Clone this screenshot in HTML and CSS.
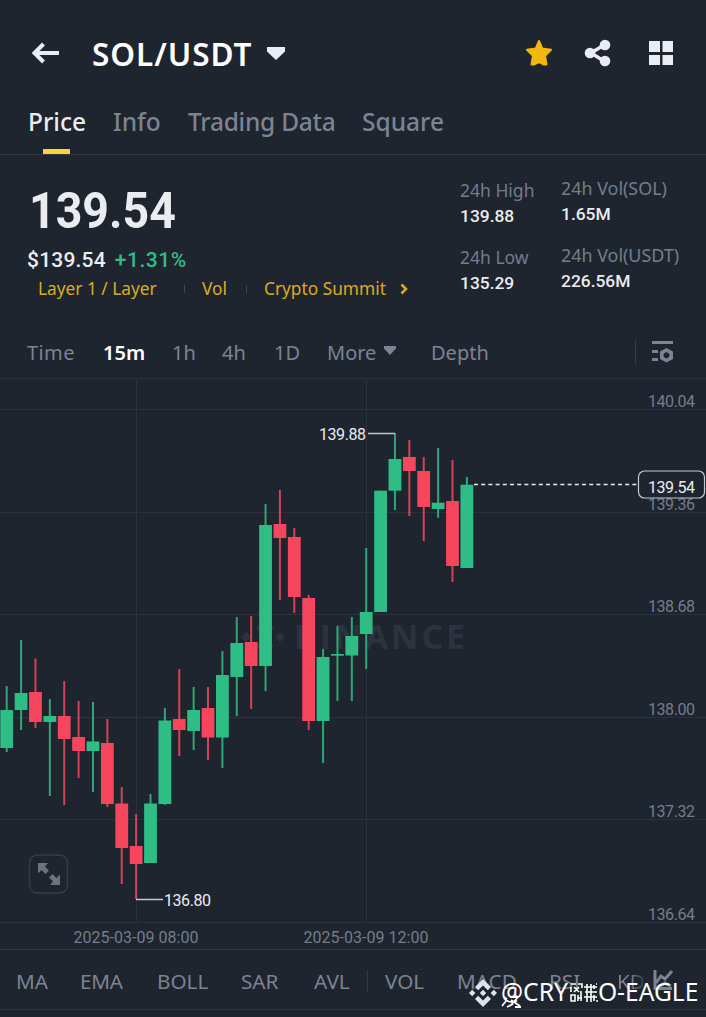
FILE: index.html
```
<!DOCTYPE html>
<html lang="en">
<head>
    <meta charset="UTF-8">
    <meta name="viewport" content="width=device-width, initial-scale=1.0">
    <title>SOL/USDT</title>
    <link rel="stylesheet" href="styles.css">
</head>
<body>
    <header class="header">
        <svg class="back" width="29" height="24" viewBox="0 0 29 24"><path d="M28 12H4M12.500 3L3.500 12l9 9" /></svg>
        <h1 class="pair">SOL/USDT</h1>
        <svg class="caret" width="18" height="14" viewBox="0 0 18 14"><path d="M0 0h18v4.500L9 13 0 4.500z" /></svg>
        <div class="actions">
            <svg width="28" height="28" viewBox="0 0 28 28"><path class="star" d="M14 2l3.200 7.500 8.800 1.200-6 6 1.500 8.800h-3L14 23l-4.500 2.500h-3l1.500-8.800L2 10.700l8.800-1.200z" /></svg>
            <svg width="28" height="28" viewBox="0 0 28 28"><path class="share-line" d="M20 6L7 14l13 8" /><circle cx="21" cy="6" r="5.300" /><circle cx="6" cy="14" r="5.300" /><circle cx="21" cy="22" r="5.300" /></svg>
            <svg width="24" height="24" viewBox="0 0 24 24"><path d="M0 0h11v11H0zM13.500 0h10.500v11H13.500zM0 14h11v10H0zM13.500 14h10.500v10H13.500z" /></svg>
        </div>
    </header>

    <nav class="tabs">
        <span class="tab active">Price</span>
        <span class="tab info">Info</span>
        <span class="tab trading">Trading Data</span>
        <span class="tab square">Square</span>
    </nav>

    <section class="summary">
        <div class="quote">
            <div class="price">139.54</div>
            <div class="fiat"><span>$139.54</span><span class="up">+1.31%</span></div>
            <div class="tags">
                <span class="tag layer">Layer 1 / Layer</span>
                <i></i>
                <span class="tag vol">Vol</span>
                <i></i>
                <span class="tag summit">Crypto Summit</span>
                <svg width="8" height="12" viewBox="0 0 8 12"><path d="M1.500 1.500L6 6l-4.500 4.500" /></svg>
            </div>
        </div>
        <dl class="stats">
            <dt>24h High</dt><dd>139.88</dd>
            <dt>24h Low</dt><dd>135.29</dd>
        </dl>
        <dl class="stats volume">
            <dt>24h Vol(SOL)</dt><dd>1.65M</dd>
            <dt>24h Vol(USDT)</dt><dd>226.56M</dd>
        </dl>
    </section>

    <nav class="intervals">
        <span class="w-time">Time</span>
        <span class="w-15m selected">15m</span>
        <span class="w-1h">1h</span>
        <span class="w-4h">4h</span>
        <span class="w-1d">1D</span>
        <span class="w-more">More</span>
        <svg class="more-caret" width="12" height="12" viewBox="0 0 12 12"><path d="M0 0h12v2.500L6 9 0 2.500z" /></svg>
        <span class="w-depth">Depth</span>
        <svg class="settings" width="22" height="22" viewBox="0 0 22 22">
            <path d="M0 0h21v3H0zM0 9h6v3H0zM0 17h6v3H0z" />
            <path fill-rule="evenodd" d="M14.500 7l6.500 3.500v7.500L14.500 21.500 8 18v-7.500zM14.500 11.200a3 3 0 1 0 .01 0z" />
        </svg>
    </nav>

    <svg class="chart" id="chart" width="706" height="571" viewBox="0 379 706 570">
        <g class="watermark">
            <path d="M265 619l9 9-4 4-5-5-5 5-4-4zM265 655l9-9-4-4-5 5-5-5-4 4zM265 632l5 5-5 5-5-5zM246 632l5 5-5 5-5-5zM280 632l5 5-5 5-5-5z" />
            <text x="294" y="649" textLength="171">BINANCE</text>
        </g>
        <path class="grid" d="M0 409.500H706M0 512.500H706M0 614.500H706M0 717.500H706M0 819.500H706M0 922.500H706M136.500 379V922M366.500 379V922" />
        <g id="candles"></g>
        <path class="marker" d="M368 433.500H395M136 899.500H163" />
        <path class="last-price" d="M474 484.500H638" />
        <g class="axis">
            <text x="648" y="407" textLength="47">140.04</text>
            <text x="648" y="510" textLength="47">139.36</text>
            <text x="648" y="612" textLength="47">138.68</text>
            <text x="648" y="714.500" textLength="47">138.00</text>
            <text x="648" y="817" textLength="47">137.32</text>
            <text x="648" y="919.500" textLength="47">136.64</text>
            <text x="73.500" y="942.500" textLength="125">2025-03-09 08:00</text>
            <text x="303.500" y="942.500" textLength="125">2025-03-09 12:00</text>
        </g>
        <rect class="badge" x="638.500" y="471" width="66" height="27" rx="6" />
        <g class="values">
            <text x="648" y="493" textLength="47">139.54</text>
            <text x="319" y="440" textLength="47">139.88</text>
            <text x="164" y="906" textLength="47">136.80</text>
        </g>
        <g class="expand">
            <rect x="29.500" y="855" width="38" height="38" rx="8" />
            <path d="M38 863h10l-3 3.500 4 4-3.500 3.500-4-4-3.500 3.500zM60 885H50l3-3.500-4-4 3.500-3.500 4 4 3.500-3.500z" />
        </g>
    </svg>

    <footer class="indicators">
        <span class="i-ma">MA</span>
        <span class="i-ema">EMA</span>
        <span class="i-boll">BOLL</span>
        <span class="i-sar">SAR</span>
        <span class="i-avl">AVL</span>
        <i></i>
        <span class="i-vol">VOL</span>
        <span class="i-macd">MACD</span>
        <span class="i-rsi">RSI</span>
        <span class="i-kd">KD</span>
        <svg width="20" height="22" viewBox="0 0 20 22"><path d="M2 0v18.500H19M3 13l5-7 4 3 7-8M7 16l5-3 6 3" /></svg>
    </footer>

    <div class="signature">
        <svg class="logo" width="28" height="28" viewBox="0 0 28 28"><path d="M14 0l8 8-3.200 3.200L14 6.400l-4.800 4.800L6 8zM14 28l8-8-3.200-3.200-4.800 4.800-4.800-4.800L6 20zM14 10.800l3.200 3.200-3.200 3.200-3.200-3.200zM3.200 10.800L6.400 14l-3.200 3.200L0 14zM24.800 10.800L28 14l-3.200 3.200-3.200-3.200z" /></svg>
        <span class="handle-start">@CRY</span>
        <svg class="squiggle" width="22" height="12" viewBox="0 0 22 12"><path d="M3 1l3 2M1 10l4-5M9 1H17L10 9M10 4l9 6M6 11l6-3M14 11h6" /></svg>
        <svg class="blocks" width="28" height="20" viewBox="0 0 28 20"><path d="M1 1h5M8 1h4v4M1 4v5M4 4l5 5M9 4L4 9M1 12h4v6H1zM8 12v6M11 8v10M8 15h4M17 1v18M21 1v18M14 4h13M15 9h12M14 14h13M24 2v4M24 12v6M26 1h1M26 18h2" /></svg>
        <span class="handle-end">O-EAGLE</span>
    </div>

    <script src="chart.js"></script>
</body>
</html>
```
FILE: styles.css
```
body {
    margin: 0;
    height: 1017px;
    overflow: hidden;
    position: relative;
    background-color: #1f252f;
    color: #eaecef;
    font-family: "Noto Sans", sans-serif;
}
span {
    white-space: nowrap;
}
.header {
    display: flex;
    align-items: center;
    height: 92px;
    padding: 14px 33px 0 31px;
    box-sizing: border-box;
}
.header svg {
    fill: #eaecf3;
}
.header .back {
    fill: none;
    stroke: #eaecf3;
    stroke-width: 4;
}
.pair {
    margin: 0 0 0 32px;
    width: 160px;
    font-size: 31.5px;
    font-weight: 600;
    letter-spacing: 0.95px;
    color: #fff;
}
.caret {
    margin: 1px 0 0 15px;
}
.actions {
    display: flex;
    align-items: center;
    margin-left: auto;
}
.actions svg:nth-child(2) {
    margin: 0 37px 0 31px;
}
.header .star {
    fill: #f0b90b;
    stroke: #f0b90b;
    stroke-width: 2;
    stroke-linejoin: round;
}
.share-line {
    fill: none;
    stroke: #eaecf3;
    stroke-width: 3.5;
}
.tabs {
    display: flex;
    height: 62px;
    padding-left: 28px;
    border-bottom: 1px solid #333a45;
    font-size: 24.5px;
    font-weight: 500;
    color: #7c8392;
}
.tab {
    line-height: 59px;
    height: 62px;
}
.tab.active {
    width: 85px;
    color: #eaecef;
    background: linear-gradient(#fcd535, #fcd535) 15px 57px / 27px 5px no-repeat;
}
.tab.info { width: 75px; }
.tab.trading { width: 174px; letter-spacing: -0.25px; }
.summary {
    display: flex;
    height: 171px;
}
.quote {
    width: 460px;
}
.price {
    margin: 25px 0 0 29px;
    font-family: Roboto, sans-serif;
    font-size: 50px;
    line-height: 62px;
    font-weight: 700;
    transform: scaleX(0.93);
    transform-origin: left;
}
.fiat {
    display: flex;
    gap: 9px;
    margin-left: 27px;
    padding-top: 1px;
    font-family: Roboto, sans-serif;
    font-size: 21px;
    font-weight: 500;
    line-height: 34px;
    letter-spacing: 0.2px;
}
.up {
    letter-spacing: 0.5px;
    color: #2ebd85;
}
.tags {
    display: flex;
    align-items: center;
    margin-left: 38px;
    font-size: 17.3px;
    line-height: 23px;
    color: #dcab22;
}
.tags i {
    width: 1px;
    height: 8px;
    background-color: #404753;
}
.tags svg {
    margin-left: 14px;
    fill: none;
    stroke: #dcab22;
    stroke-width: 2.5;
}
.tag.layer { width: 146px; }
.tag.vol { width: 44px; margin-left: 17px; }
.tag.summit { width: 122px; margin-left: 17px; }
.stats {
    width: 101px;
    margin: 23px 0 0;
}
.stats.volume {
    margin-top: 21px;
}
.stats dt {
    font-size: 17.5px;
    line-height: 25px;
    color: #757c8a;
    white-space: nowrap;
}
.stats.volume dt {
    font-size: 17.9px;
}
.stats dd {
    margin: 0 0 15px;
    font-family: Roboto, sans-serif;
    font-size: 17.4px;
    font-weight: 500;
    line-height: 27px;
}
.intervals {
    display: flex;
    align-items: center;
    height: 52px;
    padding-left: 27px;
    border-bottom: 1px solid #2b313c;
    font-size: 20px;
    color: #7c8392;
}
.intervals svg {
    fill: #7c8392;
}
.intervals .selected {
    color: #fff;
    font-weight: 600;
}
.w-time { width: 76px; letter-spacing: 0.4px; }
.w-15m { width: 69px; }
.w-1h { width: 50px; }
.w-4h { width: 52px; }
.w-1d { width: 53px; }
.w-more { width: 57px; }
.more-caret { margin-right: 35px; }
.w-depth { width: 204px; }
.settings {
    padding-left: 16px;
    border-left: 1px solid #3a414c;
}
.chart {
    display: block;
    border-bottom: 1px solid #333a45;
    box-sizing: border-box;
    font-family: Roboto, sans-serif;
    font-size: 16px;
}
.watermark {
    fill: #2d333e;
    font-family: "Open Sans", sans-serif;
    font-size: 34px;
    font-weight: 700;
}
.grid {
    stroke: #2c323d;
}
.rise { fill: #2ebd85; stroke: #2ebd85; }
.fall { fill: #f6465d; stroke: #f6465d; }
.candle rect { stroke: none; }
.candle line { stroke-width: 2; opacity: 0.85; }
.marker {
    stroke: #c4c8d0;
    stroke-width: 1.5;
}
.last-price {
    stroke: #eaecef;
    stroke-width: 1.3;
    stroke-dasharray: 4 3.2;
}
.axis { fill: #757c8a; }
.badge {
    fill: #1f252f;
    stroke: #c4c8d0;
    stroke-width: 1.2;
}
.values { fill: #eaecef; }
.expand rect {
    fill: none;
    stroke: #363c47;
    stroke-width: 1.5;
}
.expand path { fill: #6b7280; }
.indicators {
    display: flex;
    align-items: center;
    height: 60px;
    padding: 2px 0 0 16px;
    box-sizing: border-box;
    border-bottom: 1px solid #2e3540;
    font-size: 20.7px;
    color: #7c8392;
}
.indicators i {
    width: 1px;
    height: 22px;
    margin-right: 17px;
    background-color: #333a45;
}
.indicators svg {
    fill: none;
    stroke: #7c8392;
    stroke-width: 3;
}
.i-ma { width: 64px; }
.i-ema { width: 77px; letter-spacing: -0.2px; }
.i-boll { width: 84px; }
.i-sar { width: 73px; }
.i-avl { width: 53px; }
.i-vol { width: 72px; }
.i-macd { width: 92px; }
.i-rsi { width: 68px; }
.i-kd {
    width: 36px;
    background: linear-gradient(90deg, #7c8392 35%, #343b46 75%);
    -webkit-background-clip: text;
    color: transparent;
}
/* Signature laid over the indicator bar */
.signature {
    position: absolute;
    left: 469px;
    top: 978px;
    display: flex;
    align-items: center;
    height: 30px;
    font-size: 24.6px;
    line-height: 28px;
    color: #fff;
}
.handle-start,
.handle-end {
    margin-top: -2px;
}
.logo {
    margin-right: 4px;
    fill: #dfe2ea;
}
.blocks {
    margin-left: 2px;
    fill: none;
    stroke: #fff;
    stroke-width: 1.6;
}
.squiggle {
    position: absolute;
    left: 32px;
    top: 18px;
    fill: none;
    stroke: #fff;
    stroke-width: 1.8;
}
```
FILE: chart.js
```
// [color, open/close top, bottom, high, low] in chart coordinates
const candles = [
    ['rise', 710, 748, 686, 752],
    ['rise', 693, 710, 640, 730],
    ['fall', 692, 722, 658.5, 728],
    ['rise', 716, 722, 699, 796],
    ['fall', 716, 739, 681, 805],
    ['fall', 737, 751, 701, 778],
    ['rise', 741.5, 751, 702, 792],
    ['fall', 743, 804, 719, 807],
    ['fall', 803.5, 848, 787, 884],
    ['fall', 846, 864, 814, 899],
    ['rise', 803.5, 863, 794, 863],
    ['rise', 720.5, 804, 708, 805],
    ['fall', 719, 730, 669, 756],
    ['rise', 710, 731, 687, 750],
    ['fall', 708, 737.5, 687, 760],
    ['rise', 675, 737.5, 651, 768],
    ['rise', 643, 677, 617, 716],
    ['fall', 642, 666, 616, 709],
    ['rise', 525, 666, 504, 691],
    ['fall', 524, 538, 490, 600],
    ['fall', 537, 597, 528, 613],
    ['fall', 598, 721, 595, 730],
    ['rise', 657, 721, 649, 763],
    ['rise', 654, 655.7, 626, 701],
    ['rise', 636, 655.5, 617, 701],
    ['rise', 612, 634, 548, 669],
    ['rise', 490.7, 612, 490.7, 612],
    ['rise', 459, 490.7, 433, 510],
    ['fall', 457, 471, 440, 516],
    ['fall', 471, 507, 457, 541],
    ['rise', 502.7, 509, 448, 518],
    ['fall', 501, 566, 460, 582],
    ['rise', 484.7, 568, 477, 568]
];

const svgNS = 'http://www.w3.org/2000/svg';
const group = document.getElementById('candles');

function addShape(parent, name, attrs) {
    const shape = document.createElementNS(svgNS, name);
    for (const key in attrs) {
        shape.setAttribute(key, attrs[key]);
    }
    parent.appendChild(shape);
    return shape;
}

candles.forEach(([color, top, bottom, high, low], i) => {
    const x = 6.7 + i * 14.38;
    const candle = addShape(group, 'g', { class: 'candle ' + color });
    addShape(candle, 'line', { x1: x, x2: x, y1: high, y2: low });
    addShape(candle, 'rect', { x: x - 6.4, y: top, width: 12.8, height: bottom - top });
});
```
